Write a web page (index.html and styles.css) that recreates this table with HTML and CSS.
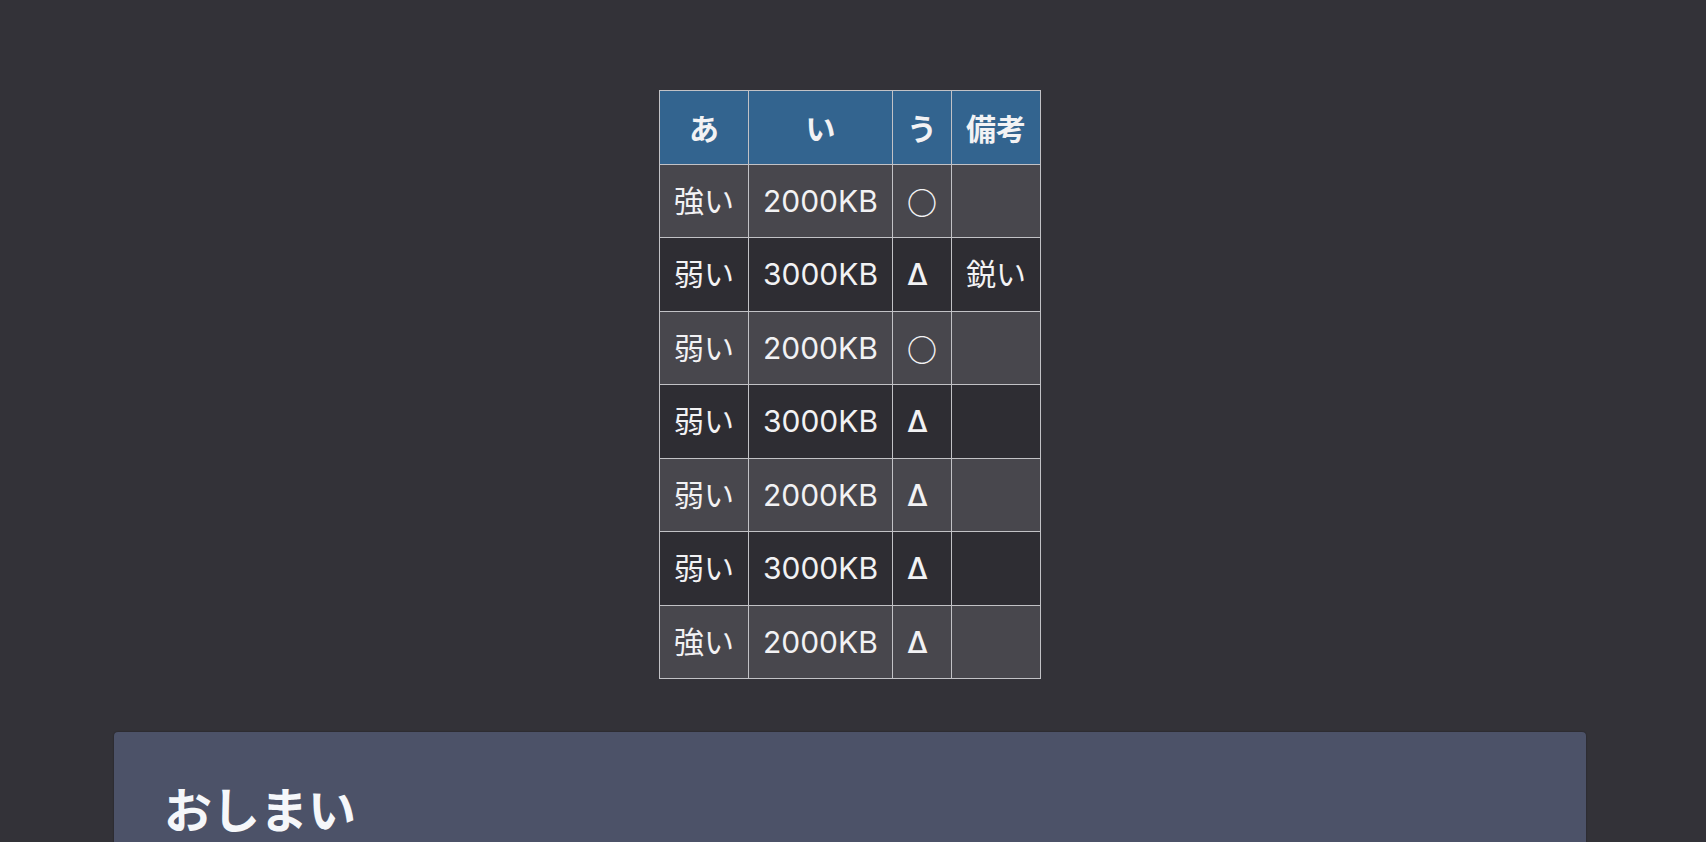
FILE: index.html
```html
<!DOCTYPE html>
<html lang="ja">

<head>
    <meta charset="UTF-8">
    <meta name="viewport" content="width=device-width,initial-scale=1">
    <link rel="stylesheet" href="styles.css">
    <title>おしまい</title>
</head>

<body>
    <main class="page">
        <table class="spec">
            <thead>
                <tr>
                    <th>あ</th>
                    <th>い</th>
                    <th>う</th>
                    <th>備考</th>
                </tr>
            </thead>
            <tbody>
                <tr><td>強い</td><td>2000KB</td><td class="mark">○</td><td></td></tr>
                <tr><td>弱い</td><td>3000KB</td><td class="mark tri">Δ</td><td>鋭い</td></tr>
                <tr><td>弱い</td><td>2000KB</td><td class="mark">○</td><td></td></tr>
                <tr><td>弱い</td><td>3000KB</td><td class="mark tri">Δ</td><td></td></tr>
                <tr><td>弱い</td><td>2000KB</td><td class="mark tri">Δ</td><td></td></tr>
                <tr><td>弱い</td><td>3000KB</td><td class="mark tri">Δ</td><td></td></tr>
                <tr><td>強い</td><td>2000KB</td><td class="mark tri">Δ</td><td></td></tr>
            </tbody>
        </table>

        <section class="panel">
            <h2 class="panel-title">おしまい</h2>
        </section>
    </main>
</body>

</html>
```

FILE: styles.css
```css
*,
*::before,
*::after {
    box-sizing: border-box;
    padding: 0;
    margin: 0;
}

body {
    background: #333238;
    color: #f2f2f4;
    font-family: Inter, "Noto Sans CJK JP", sans-serif;
    overflow: hidden;
}

.page {
    width: 1472px;
    margin: 0 0 0 114px;
    padding-top: 90px;
}

.spec {
    margin: 0 auto;
    border-collapse: collapse;
    font-size: 30px;
    line-height: 44.5px;
}

.spec th,
.spec td {
    border: 1px solid #c2c2c6;
    padding: 14px 14px;
    white-space: nowrap;
}

.spec th {
    background: #33648f;
    font-family: "Noto Sans CJK JP", sans-serif;
    font-weight: 700;
    text-align: center;
}

.spec td {
    text-align: left;
}

.spec td.mark {
    font-family: "Noto Sans CJK JP", sans-serif;
    font-weight: 700;
    min-width: 57px;
    padding-right: 12px;
}

.spec td.tri {
    font-family: Inter, sans-serif;
    font-weight: 500;
}

.spec tbody tr:nth-child(odd) td {
    background: #48474d;
}

.spec tbody tr:nth-child(even) td {
    background: #2e2d33;
}

.panel {
    margin-top: 53px;
    min-height: 300px;
    padding: 42px 50px;
    background: #4c5268;
    border-radius: 4px;
    box-shadow: 0 0 2px rgba(0, 0, 0, 0.4);
}

.panel-title {
    font-family: "Noto Sans CJK JP", sans-serif;
    font-size: 48px;
    font-weight: 700;
    line-height: 1.4;
    color: #f5f7fa;
}
```
